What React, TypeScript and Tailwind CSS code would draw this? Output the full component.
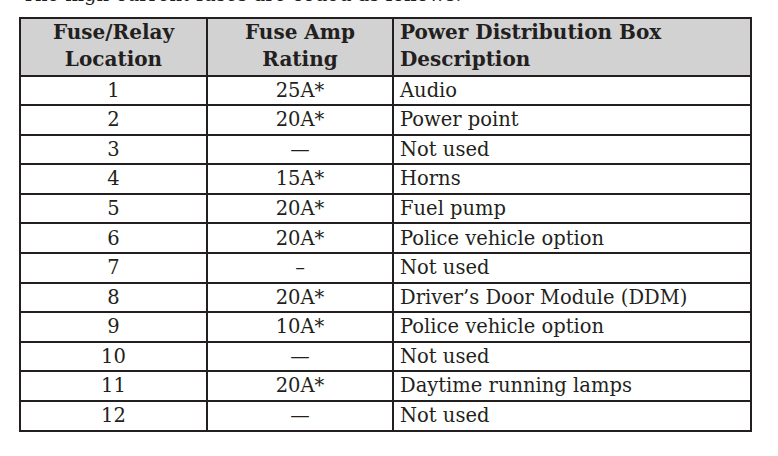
const rows = [
  { loc: "1", amp: "25A*", desc: "Audio" },
  { loc: "2", amp: "20A*", desc: "Power point" },
  { loc: "3", amp: "—", desc: "Not used" },
  { loc: "4", amp: "15A*", desc: "Horns" },
  { loc: "5", amp: "20A*", desc: "Fuel pump" },
  { loc: "6", amp: "20A*", desc: "Police vehicle option" },
  { loc: "7", amp: "–", desc: "Not used" },
  { loc: "8", amp: "20A*", desc: "Driver’s Door Module (DDM)" },
  { loc: "9", amp: "10A*", desc: "Police vehicle option" },
  { loc: "10", amp: "—", desc: "Not used" },
  { loc: "11", amp: "20A*", desc: "Daytime running lamps" },
  { loc: "12", amp: "—", desc: "Not used" },
];

export default function App() {
  return (
    <div className="w-[778px] h-[456px] bg-white text-[#231f20] overflow-hidden font-['DejaVu_Serif',serif]">
      {/* intro line, cut off by the top of the page */}
      <div className="h-[16.5px] overflow-hidden pl-[22px]">
        <p className="text-[19.5px] leading-[20px] -mt-[15px] whitespace-nowrap">
          The high-current fuses are coded as follows.
        </p>
      </div>

      <div className="ml-[19px] w-[733px] border-2 border-[#231f20]">
        {/* header */}
        <div className="flex h-[58px] bg-[#d2d2d2] border-b-2 border-[#231f20] font-bold text-[20px] leading-[27px]">
          <div className="w-[187px] shrink-0 border-r-2 border-[#231f20] flex flex-col items-center justify-center pb-[2px]">
            <span>Fuse/Relay</span>
            <span>Location</span>
          </div>
          <div className="w-[186px] shrink-0 border-r-2 border-[#231f20] flex flex-col items-center justify-center pb-[2px]">
            <span>Fuse Amp</span>
            <span>Rating</span>
          </div>
          <div className="flex-1 flex flex-col justify-center pl-[6px] pb-[2px]">
            <span>Power Distribution Box</span>
            <span>Description</span>
          </div>
        </div>

        {/* body */}
        {rows.map((r, i) => (
          <div
            key={r.loc}
            className={`flex text-[19.5px] leading-none ${i < rows.length - 1 ? "h-[29.6px] border-b-2 border-[#231f20]" : "h-[27.6px]"}`}
          >
            <div className="w-[187px] shrink-0 border-r-2 border-[#231f20] flex items-center justify-center">
              {r.loc}
            </div>
            <div className="w-[186px] shrink-0 border-r-2 border-[#231f20] flex items-center justify-center">
              {r.amp}
            </div>
            <div className="flex-1 flex items-center pl-[6px] whitespace-nowrap">{r.desc}</div>
          </div>
        ))}
      </div>
    </div>
  );
}
